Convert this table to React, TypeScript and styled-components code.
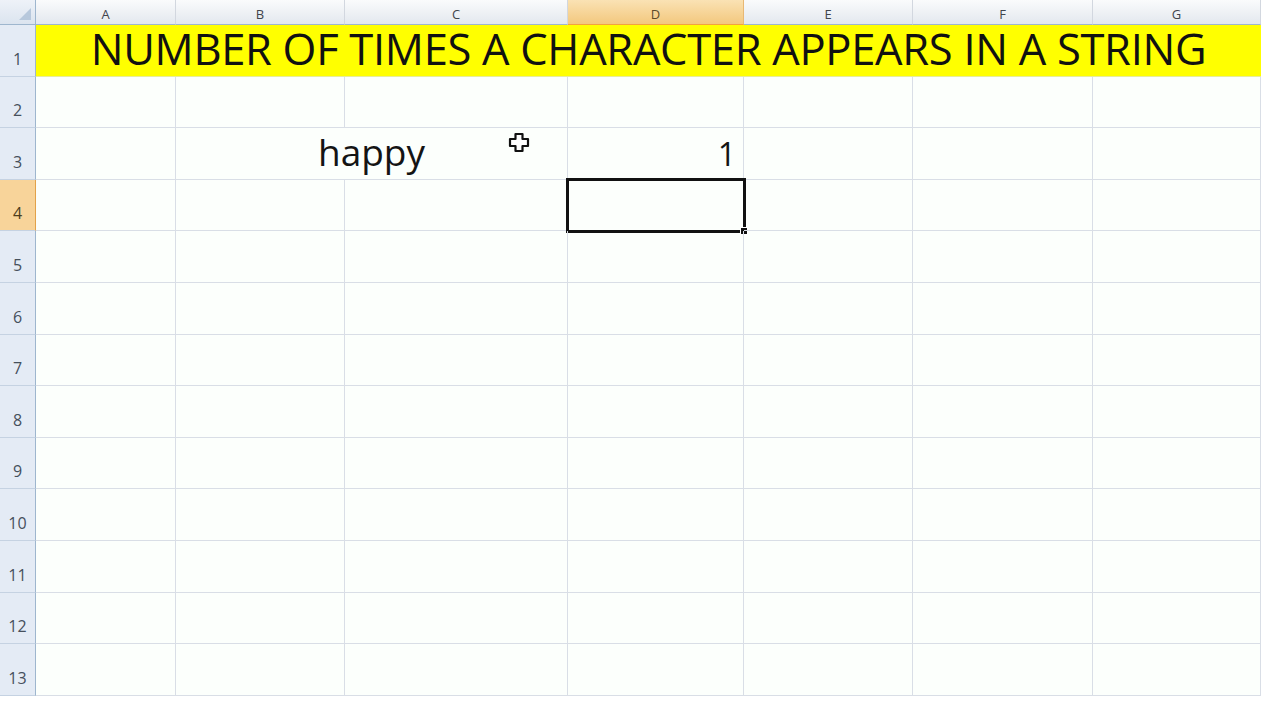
import React from "react";
import styled, { createGlobalStyle, css } from "styled-components";

const Global = createGlobalStyle`
  html, body { margin: 0; padding: 0; background: #ffffff; }
  body { width: 1280px; height: 720px; overflow: hidden; font-family: "Open Sans", "Liberation Sans", sans-serif; }
`;

const COLS = [
  { name: "A", w: 140 },
  { name: "B", w: 169 },
  { name: "C", w: 223 },
  { name: "D", w: 176 },
  { name: "E", w: 169 },
  { name: "F", w: 180 },
  { name: "G", w: 168 },
];
const ROW_H = 51.6;
const ROWS = 13;
const ACTIVE_COL = "D";
const ACTIVE_ROW = 4;

const Page = styled.div`
  position: relative;
  width: 1280px;
  height: 720px;
  background: #ffffff;
`;

const Sheet = styled.div`
  display: grid;
  grid-template-columns: 36px ${COLS.map((c) => `${c.w}px`).join(" ")};
  grid-template-rows: 25px repeat(${ROWS}, ${ROW_H}px);
  width: 1261px;
  background: #fcfffc;
  border-right: 1px solid #d4d8dc;
  box-sizing: border-box;
`;

const Corner = styled.div`
  position: relative;
  background: linear-gradient(#eef2f8, #dbe4ef);
  border-right: 1px solid #9eb6ce;
  border-bottom: 1px solid #9eb6ce;
  &::after {
    content: "";
    position: absolute;
    right: 4px;
    bottom: 4px;
    width: 0;
    height: 0;
    border-left: 12px solid transparent;
    border-bottom: 12px solid #b7c8dc;
  }
`;

const ColHead = styled.div<{ $active?: boolean }>`
  display: flex;
  align-items: center;
  justify-content: center;
  padding-top: 3px;
  box-sizing: border-box;
  font-family: "Open Sans", "Liberation Sans", sans-serif;
  font-size: 13px;
  line-height: 14px;
  color: #3f444c;
  border-right: 1px solid #d2d7df;
  border-bottom: 1px solid #9eb6ce;
  background: linear-gradient(#fafbfc, #e3e8ee);
  ${(p) =>
    p.$active &&
    css`
      background: linear-gradient(#fae2b4, #f3c87e);
      color: #5a4a2a;
      border-right-color: #e8b874;
      border-bottom: 1px solid #f2a23e;
    `}
`;

const RowHead = styled.div<{ $active?: boolean }>`
  display: flex;
  align-items: flex-end;
  justify-content: center;
  padding-bottom: 8px;
  box-sizing: border-box;
  font-family: "Open Sans", "Liberation Sans", sans-serif;
  font-size: 16px;
  line-height: 18px;
  color: #46505c;
  background: #e4ebf5;
  border-right: 1px solid #9eb6ce;
  border-bottom: 1px solid #c5d2e2;
  ${(p) =>
    p.$active &&
    css`
      background: #f8d49a;
      color: #4e3d1c;
      border-right-color: #e2a24a;
    `}
`;

const Cell = styled.div<{ $span?: number; $align?: "left" | "center" | "right"; $yellow?: boolean }>`
  position: relative;
  display: flex;
  align-items: center;
  justify-content: ${(p) => (p.$align === "right" ? "flex-end" : p.$align === "center" ? "center" : "flex-start")};
  grid-column: span ${(p) => p.$span ?? 1};
  border-right: 1px solid #d9dee6;
  border-bottom: 1px solid #d9dee6;
  background: ${(p) => (p.$yellow ? "#ffff00" : "transparent")};
  ${(p) => p.$yellow && css`border-right: none; border-bottom-color: #e8ec9a;`}
  min-width: 0;
  white-space: nowrap;
`;

const Title = styled.div`
  display: block;
  font-family: "Open Sans", "Liberation Sans", sans-serif;
  font-size: 43.5px;
  line-height: 40px;
  height: 40px;
  color: #111111;
  letter-spacing: -0.3px;
  margin-bottom: 3px;
`;

const Word = styled.span`
  font-family: "Open Sans", "Liberation Sans", sans-serif;
  font-size: 37px;
  line-height: 44px;
  color: #141414;
  padding-bottom: 2px;
`;

const Num = styled.span`
  font-family: "Open Sans", "Liberation Sans", sans-serif;
  font-size: 32px;
  line-height: 40px;
  color: #141414;
  padding-right: 7px;
  padding-top: 2px;
`;

const Selected = styled.div`
  position: absolute;
  left: -2px;
  top: -2px;
  right: -3px;
  bottom: -3px;
  border: 3px solid #111111;
  pointer-events: none;
  &::after {
    content: "";
    position: absolute;
    right: -5px;
    bottom: -5px;
    width: 6px;
    height: 6px;
    background: #111111;
    border: 1px solid #ffffff;
  }
`;

const Cursor = styled.svg`
  position: absolute;
  left: 508px;
  top: 132px;
  width: 22px;
  height: 21px;
`;

export default function App() {
  const rows = [];
  for (let r = 1; r <= ROWS; r++) {
    rows.push(
      <RowHead key={`h${r}`} $active={r === ACTIVE_ROW}>
        {r}
      </RowHead>
    );
    if (r === 1) {
      rows.push(
        <Cell key="title" $span={7} $align="center" $yellow>
          <Title>NUMBER OF TIMES A CHARACTER APPEARS IN A STRING</Title>
        </Cell>
      );
      continue;
    }
    if (r === 3) {
      rows.push(<Cell key="3A" />);
      rows.push(
        <Cell key="3BC" $span={2} $align="center">
          <Word>happy</Word>
        </Cell>
      );
      rows.push(
        <Cell key="3D" $align="right">
          <Num>1</Num>
        </Cell>
      );
      rows.push(<Cell key="3E" />, <Cell key="3F" />, <Cell key="3G" />);
      continue;
    }
    COLS.forEach((c) => {
      rows.push(
        <Cell key={`${r}${c.name}`}>
          {r === ACTIVE_ROW && c.name === ACTIVE_COL && <Selected />}
        </Cell>
      );
    });
  }

  return (
    <Page>
      <Global />
      <Sheet>
        <Corner />
        {COLS.map((c) => (
          <ColHead key={c.name} $active={c.name === ACTIVE_COL}>
            {c.name}
          </ColHead>
        ))}
        {rows}
      </Sheet>
      <Cursor viewBox="0 0 22 21">
        <path
          d="M7.5 2 H14.5 V7 H20 V14 H14.5 V19 H7.5 V14 H2 V7 H7.5 Z"
          fill="#ffffff"
          stroke="#111111"
          strokeWidth="2.2"
          strokeLinejoin="round"
        />
      </Cursor>
    </Page>
  );
}
